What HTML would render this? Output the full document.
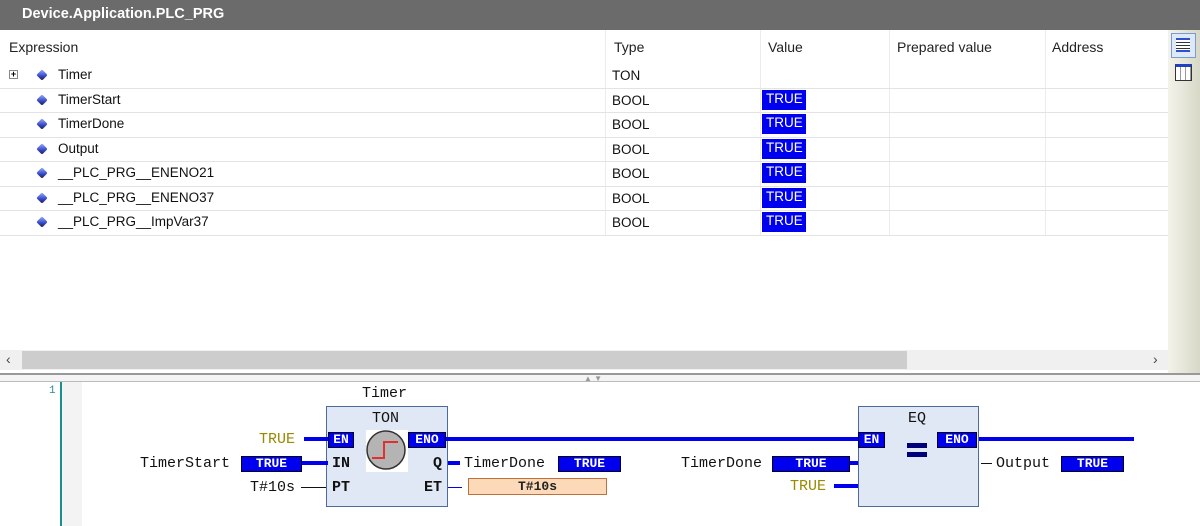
<!DOCTYPE html>
<html><head><style>
*{margin:0;padding:0;box-sizing:border-box}
body{width:1200px;height:526px;overflow:hidden;background:#fff;font-family:"Liberation Sans",sans-serif;position:relative}
.a{position:absolute}
.hd{font-size:14px;color:#222}
.cell{font-size:13.5px;color:#111}
.hl{position:absolute;left:0;width:1168px;height:1px;background:#e3e3e3}
.vl{position:absolute;top:30px;width:1px;height:206px;background:#ececec}
.tv{position:absolute;left:762px;width:44px;height:20px;background:#0000f0;color:#fff;font-size:13.5px;padding:1px 0 0 4px}
.ic{position:absolute;left:37px;width:10px;height:10px;background:linear-gradient(135deg,#9ab0ff,#3346c8 60%,#222);transform:rotate(45deg) scale(.8);border-radius:2px}
.m{position:absolute;font-family:"Liberation Mono",monospace;font-size:15px;line-height:16px;color:#111;white-space:nowrap}
.bx{position:absolute;background:#0000ee;color:#fff;font-family:"Liberation Mono",monospace;font-size:13px;font-weight:bold;text-align:center;line-height:14px;border:1px solid #002;}
.w{position:absolute;background:#0000ee}
.blk{position:absolute;background:#e1e8f5;border:1.5px solid #4d6a9c}
</style></head><body>
<div class="a" style="left:0;top:0;width:1200px;height:30px;background:#6b6b6b"></div>
<div class="a" style="left:22px;top:6px;color:#fff;font-weight:bold;font-size:14.5px">Device.Application.PLC_PRG</div>
<div class="a" style="left:1168px;top:30px;width:32px;height:345px;background:linear-gradient(90deg,#f3f3ea,#d8d8c8)"></div>
<div class="a" style="left:1171px;top:33px;width:25px;height:25px;border:1px solid #7a9ad0;background:#dde8f8"></div>
<div class="a" style="left:1176px;top:38px;width:14px;height:14px;border-top:2px solid #3050d0;border-bottom:2px solid #3050d0;background:repeating-linear-gradient(#fff 0 2px,#333 2px 3px)"></div>
<div class="a" style="left:1175px;top:64px;width:17px;height:17px;border:1px solid #333;border-top:3px solid #2040c0;background:repeating-linear-gradient(90deg,#fff 0 4px,#999 4px 5px),#fff"></div>

<div class="hd a" style="left:9px;top:39px">Expression</div>
<div class="hd a" style="left:614px;top:39px">Type</div>
<div class="hd a" style="left:768px;top:39px">Value</div>
<div class="hd a" style="left:897px;top:39px">Prepared value</div>
<div class="hd a" style="left:1052px;top:39px">Address</div>
<div class="vl" style="left:605px"></div><div class="vl" style="left:760px"></div><div class="vl" style="left:889px"></div><div class="vl" style="left:1045px"></div>

<div class="a" style="left:9px;top:70px;width:9px;height:9px;border:1px solid #888;font-size:9px;line-height:7px;text-align:center;font-weight:bold">+</div>
<div class="ic" style="top:70px"></div><div class="cell a" style="left:58px;top:67px">Timer</div><div class="cell a" style="left:612px;top:68px">TON</div>
<div class="hl" style="top:88px"></div>
<div class="ic" style="top:95px"></div><div class="cell a" style="left:58px;top:92px">TimerStart</div><div class="cell a" style="left:612px;top:93px">BOOL</div><div class="tv" style="top:90px">TRUE</div>
<div class="hl" style="top:112px"></div>
<div class="ic" style="top:119px"></div><div class="cell a" style="left:58px;top:116px">TimerDone</div><div class="cell a" style="left:612px;top:117px">BOOL</div><div class="tv" style="top:114px">TRUE</div>
<div class="hl" style="top:137px"></div>
<div class="ic" style="top:144px"></div><div class="cell a" style="left:58px;top:141px">Output</div><div class="cell a" style="left:612px;top:142px">BOOL</div><div class="tv" style="top:139px">TRUE</div>
<div class="hl" style="top:161px"></div>
<div class="ic" style="top:168px"></div><div class="cell a" style="left:58px;top:165px">__PLC_PRG__ENENO21</div><div class="cell a" style="left:612px;top:166px">BOOL</div><div class="tv" style="top:163px">TRUE</div>
<div class="hl" style="top:186px"></div>
<div class="ic" style="top:193px"></div><div class="cell a" style="left:58px;top:190px">__PLC_PRG__ENENO37</div><div class="cell a" style="left:612px;top:191px">BOOL</div><div class="tv" style="top:188px">TRUE</div>
<div class="hl" style="top:210px"></div>
<div class="ic" style="top:217px"></div><div class="cell a" style="left:58px;top:214px">__PLC_PRG__ImpVar37</div><div class="cell a" style="left:612px;top:215px">BOOL</div><div class="tv" style="top:212px">TRUE</div>
<div class="hl" style="top:235px"></div>

<div class="a" style="left:0;top:350px;width:1168px;height:20px;background:#f0f0f0"></div>
<div class="a" style="left:22px;top:351px;width:885px;height:18px;background:#cdcdcd"></div>
<div class="a" style="left:6px;top:351px;font-size:14px;color:#444">&lsaquo;</div>
<div class="a" style="left:1153px;top:351px;font-size:14px;color:#444">&rsaquo;</div>
<div class="a" style="left:0;top:373px;width:1200px;height:9px;background:#f4f4f4;border-top:2px solid #999;border-bottom:1px solid #bbb"></div>
<div class="a" style="left:584px;top:374px;font-size:8px;color:#999">▲ ▼</div>

<div class="a" style="left:60px;top:382px;width:2px;height:144px;background:#17918a"></div>
<div class="a" style="left:62px;top:382px;width:20px;height:144px;background:#f3f3f3"></div>
<div class="a" style="left:49px;top:385px;font-size:11px;color:#2c8e8e;font-family:'Liberation Mono',monospace">1</div>

<div class="m" style="left:362px;top:386px">Timer</div>
<div class="blk" style="left:326px;top:406px;width:122px;height:101px"></div>
<div class="m" style="left:372px;top:411px">TON</div>
<div class="bx" style="left:328px;top:432px;width:26px">EN</div>
<div class="bx" style="left:408px;top:432px;width:38px">ENO</div>
<div class="m" style="left:332px;top:456px;font-weight:bold">IN</div>
<div class="m" style="left:332px;top:480px;font-weight:bold">PT</div>
<div class="m" style="left:433px;top:456px;font-weight:bold">Q</div>
<div class="m" style="left:424px;top:480px;font-weight:bold">ET</div>
<svg class="a" style="left:364px;top:428px" width="46" height="46"><rect x="2" y="2" width="42" height="42" fill="#fff"/><circle cx="22" cy="22" r="19" fill="#b4b4b4" stroke="#333" stroke-width="1.5"/><path d="M8 30h12V14h14" stroke="#e03030" stroke-width="2" fill="none"/></svg>
<div class="w" style="left:446px;top:437px;width:688px;height:4px"></div>
<div class="m" style="left:259px;top:432px;color:#9a8a00">TRUE</div>
<div class="w" style="left:304px;top:437px;width:24px;height:4px"></div>
<div class="m" style="left:140px;top:456px">TimerStart</div>
<div class="bx" style="left:241px;top:456px;width:61px">TRUE</div>
<div class="w" style="left:302px;top:461px;width:26px;height:4px"></div>
<div class="m" style="left:250px;top:480px">T#10s</div>
<div class="a" style="left:301px;top:487px;width:25px;height:1px;background:#111"></div>
<div class="w" style="left:448px;top:461px;width:12px;height:4px"></div>
<div class="m" style="left:464px;top:456px">TimerDone</div>
<div class="bx" style="left:558px;top:456px;width:63px">TRUE</div>
<div class="w" style="left:448px;top:487px;width:14px;height:1px"></div>
<div class="a" style="left:468px;top:478px;width:139px;height:17px;background:#fcd9b8;border:1px solid #c0703a;font-family:'Liberation Mono',monospace;font-size:13px;font-weight:bold;text-align:center;line-height:15px;color:#222">T#10s</div>

<div class="blk" style="left:858px;top:406px;width:121px;height:101px"></div>
<div class="m" style="left:908px;top:411px">EQ</div>
<div class="bx" style="left:858px;top:432px;width:27px">EN</div>
<div class="bx" style="left:937px;top:432px;width:40px">ENO</div>
<div class="a" style="left:907px;top:443px;width:20px;height:5px;background:#00007a"></div>
<div class="a" style="left:907px;top:452px;width:20px;height:5px;background:#00007a"></div>
<div class="m" style="left:681px;top:456px">TimerDone</div>
<div class="bx" style="left:772px;top:456px;width:78px">TRUE</div>
<div class="w" style="left:850px;top:461px;width:8px;height:4px"></div>
<div class="m" style="left:790px;top:479px;color:#9a8a00">TRUE</div>
<div class="w" style="left:834px;top:484px;width:24px;height:4px"></div>
<div class="a" style="left:981px;top:463px;width:11px;height:1px;background:#111"></div>
<div class="m" style="left:996px;top:456px">Output</div>
<div class="bx" style="left:1061px;top:456px;width:63px">TRUE</div>
</body></html>
